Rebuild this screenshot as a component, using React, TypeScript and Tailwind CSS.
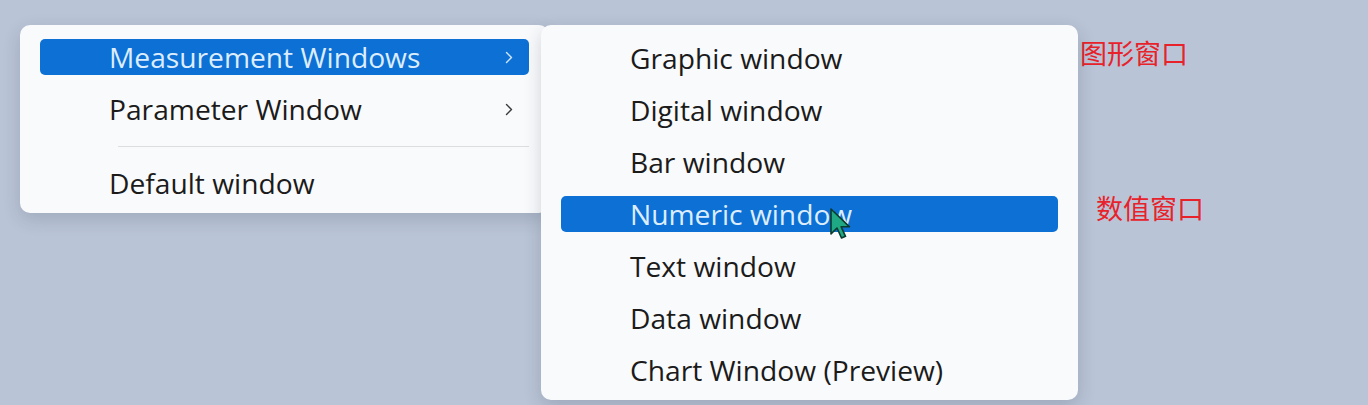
import React from "react";

const font = { fontFamily: '"Open Sans", "Noto Sans", sans-serif' };

function Chevron({ light }: { light?: boolean }) {
  return (
    <svg width="8" height="13" viewBox="0 0 8 13" fill="none">
      <path d="M1.5 1.5 L6.5 6.5 L1.5 11.5" stroke={light ? "#cfe6ff" : "#3a3a3a"} strokeWidth="1.4" strokeLinecap="round" strokeLinejoin="round" />
    </svg>
  );
}

function Cursor() {
  return (
    <svg className="absolute left-[268px] top-[12px]" width="26" height="34" viewBox="0 0 26 34">
      <path d="M2 1 L2 26 L8 20 L12.5 30 L16.5 28.3 L12.2 18.8 L20.5 18.8 Z" fill="#1fa884" stroke="#0b3a2e" strokeWidth="1.6" strokeLinejoin="round" />
    </svg>
  );
}

function Item({ label, active, chevron, cursor }: { label: string; active?: boolean; chevron?: boolean; cursor?: boolean }) {
  return (
    <div className="h-[52px] px-[20px] py-[8px]">
      <div
        className={
          "relative h-[36px] rounded-[5px] flex items-center pl-[69px] pr-[16px] " +
          (active ? "bg-[#0d70d4] text-[#dcedff]" : "text-[#1b1b1b]")
        }
      >
        <span className="text-[28.2px] leading-none flex-1 whitespace-nowrap">{label}</span>
        {chevron && <Chevron light={active} />}
        {cursor && <Cursor />}
      </div>
    </div>
  );
}

export default function App() {
  return (
    <div className="w-[1368px] h-[405px] bg-[#b9c4d6] overflow-hidden" style={font}>
      <div className="flex items-start pl-[20px] pt-[25px]">
        <div className="w-[529px] shrink-0 bg-[#f9fafc] rounded-[10px] shadow-[0_6px_18px_rgba(30,40,60,0.16)] pt-[6px] pb-[4px]">
          <Item label="Measurement Windows" active chevron />
          <Item label="Parameter Window" chevron />
          <div className="h-[22px] flex items-center pl-[98px] pr-[20px]">
            <div className="h-px w-full bg-[#dcdde0]" />
          </div>
          <Item label="Default window" />
        </div>
        <div className="relative z-10 ml-[-8px] w-[537px] shrink-0 bg-[#f9fafc] rounded-[10px] shadow-[0_6px_18px_rgba(30,40,60,0.18)] pt-[7px] pb-[4px]">
          <Item label="Graphic window" />
          <Item label="Digital window" />
          <Item label="Bar window" />
          <Item label="Numeric window" active cursor />
          <Item label="Text window" />
          <Item label="Data window" />
          <Item label="Chart Window (Preview)" />
        </div>
        <div
          className="flex flex-col text-[#e8222b] text-[27px] leading-[36px] pt-[10px]"
          style={{ fontFamily: '"Noto Sans CJK SC", sans-serif' }}
        >
          <div className="ml-[2px]">图形窗口</div>
          <div className="ml-[18px] mt-[119px]">数值窗口</div>
        </div>
      </div>
    </div>
  );
}
